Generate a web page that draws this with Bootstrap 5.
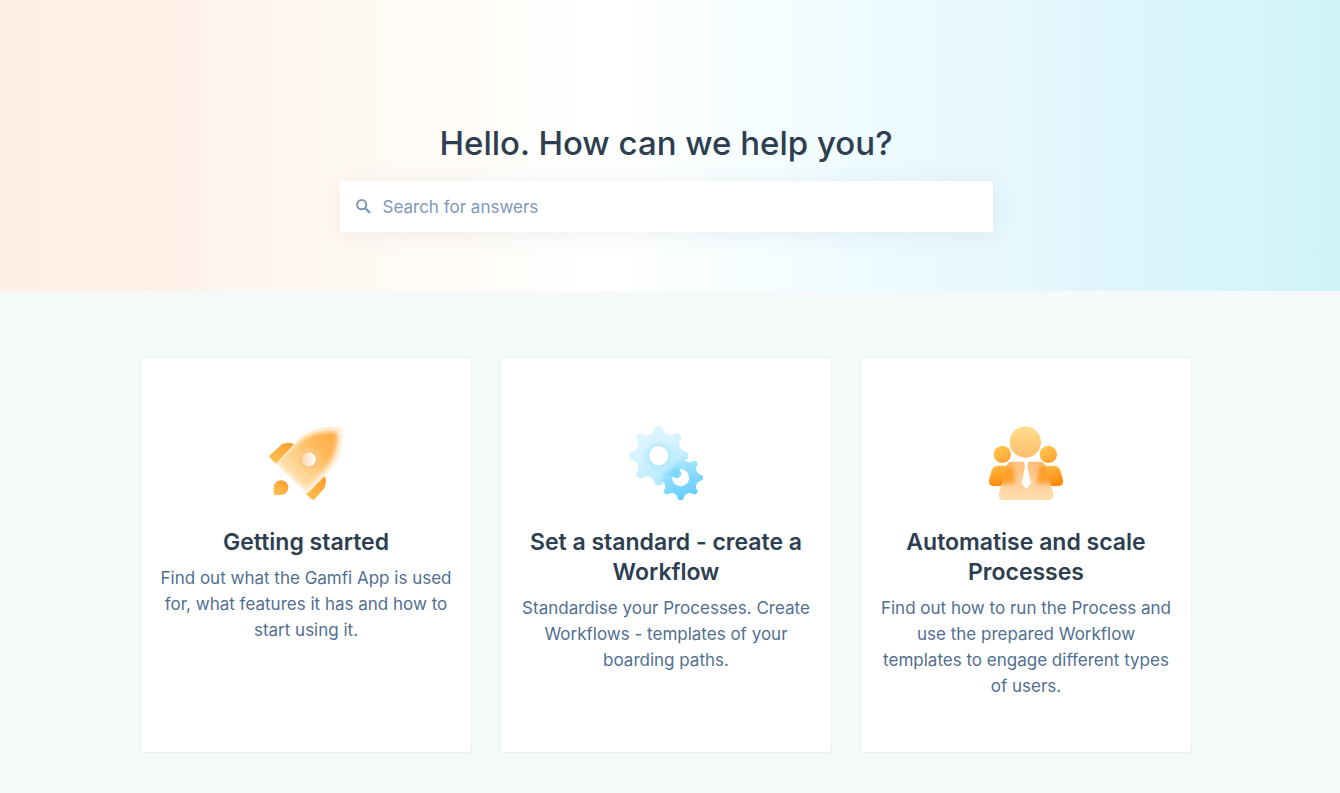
<!DOCTYPE html>
<html lang="en">
<head>
<meta charset="utf-8">
<meta name="viewport" content="width=device-width, initial-scale=1">
<title>Help center</title>
<link rel="stylesheet" href="https://cdn.jsdelivr.net/npm/bootstrap@5.3.0/dist/css/bootstrap.min.css">
<style>
  body { font-family: Inter, "Open Sans", sans-serif; font-size: 17px; line-height: 26px; color: #516f90; background: #f5f9fa; }
  .hero { padding: 120px 8px 59px 0; background: linear-gradient(90deg, #ffeee2 0%, #fff0e6 10%, #fff5f0 19%, #fffaf5 30%, #fffdfa 38%, #fff 45%, #fafeff 52%, #f0fcff 62%, #e8f9fe 72%, #dff5fc 83%, #d5f5fa 92%, #cff3f9 100%); }
  .hero-title { font-size: 33px; line-height: 46px; font-weight: 500; color: #2d3e50; margin-bottom: 15px; }
  .search-box { max-width: 653px; height: 51px; background: #fff; border-radius: 3px; box-shadow: 0 2px 24px rgba(45, 62, 80, .08); padding: 0 16px; gap: 12px; }
  .search-box input { color: #33475b; font-size: 17px; line-height: 26px; }
  .search-box input::placeholder { color: #7c98b6; opacity: 1; }
  .topics { max-width: 1080px; padding: 66px 14px 40px; }
  .topics .row { --bs-gutter-x: 28px; --bs-gutter-y: 28px; }
  .topic { color: #516f90; border: 1px solid #eaf0f3; border-radius: 3px; padding: 65px 19px 53px; }
  .topic svg { margin-bottom: 24px; }
  .topic-title { font-size: 23px; line-height: 30px; font-weight: 600; color: #2d3e50; margin-bottom: 8px; }
</style>
</head>
<body>
<header class="hero">
  <div class="container-fluid d-flex flex-column align-items-center">
    <h1 class="hero-title text-center">Hello. How can we help you?</h1>
    <form class="search-box d-flex align-items-center w-100" role="search">
      <label for="search" class="d-flex flex-shrink-0" aria-label="Search">
        <svg width="15" height="15" viewBox="0 0 15 15" fill="none" stroke="#7c98b6" stroke-width="2"><circle cx="5.7" cy="5.7" r="4.6"/><path d="M9 9l5 5" stroke-width="2.4"/></svg>
      </label>
      <input id="search" type="text" class="form-control border-0 shadow-none p-0" placeholder="Search for answers">
    </form>
  </div>
</header>

<main class="pe-2">
  <div class="topics container-fluid">
    <div class="row row-cols-1 row-cols-md-3">
      <div class="col">
        <a href="#" class="topic card h-100 text-center text-decoration-none align-items-center">
          <svg width="80" height="80" viewBox="33 24 240 240" aria-hidden="true">
            <defs>
              <linearGradient id="fin" x1="0" y1="1" x2="1" y2="0"><stop stop-color="#ffc553"/><stop offset="1" stop-color="#ff9a2b"/></linearGradient>
              <linearGradient id="hull" gradientUnits="userSpaceOnUse" x1="100" y1="200" x2="245" y2="60"><stop stop-color="#ffe3b8"/><stop offset=".3" stop-color="#ffd48f"/><stop offset=".65" stop-color="#ffba5c"/><stop offset="1" stop-color="#ffac45"/></linearGradient>
              <linearGradient id="port"><stop stop-color="#ffd3a5"/><stop offset="1" stop-color="#fff"/></linearGradient>
              <filter id="soft6" x="-20%" y="-20%" width="140%" height="140%"><feGaussianBlur stdDeviation="7"/></filter>
              <clipPath id="hullClip"><path d="M62 146L139 64Q181 30 257 35Q265 35 265 43Q269 124 224 168L157 236Z"/></clipPath>
            </defs>
            <path fill="url(#fin)" d="M46 119L76 92Q88 81 110 84L119 91L63 147L43 127Q40 123 46 119Z"/>
            <path fill="url(#fin)" d="M152 235L206 181L212 190Q215 209 205 223L180 251Q174 257 167 251Z"/>
            <path fill="url(#fin)" d="M56 219A22 22 0 1 1 78 240H60Q56 240 56 236Z"/>
            <path fill="#fff3e2" d="M62 146L139 64Q181 30 257 35Q265 35 265 43Q269 124 224 168L157 236Z"/>
            <g clip-path="url(#hullClip)"><path filter="url(#soft6)" fill="url(#hull)" d="M65 139L142 74Q180 48 238 50Q249 51 248 62Q247 119 216 156L154 222Z"/></g>
            <circle cx="163" cy="133" r="34" fill="#ffc783" opacity=".65"/>
            <circle cx="163" cy="133" r="25" fill="#ffb061" opacity=".7"/>
            <circle cx="161" cy="133" r="22" fill="url(#port)"/>
          </svg>
          <h2 class="topic-title">Getting started</h2>
          <p class="mb-0">Find out what the Gamfi App is used for, what features it has and how to start using it.</p>
        </a>
      </div>
      <div class="col">
        <a href="#" class="topic card h-100 text-center text-decoration-none align-items-center">
          <svg width="80" height="80" viewBox="30 24 240 240" aria-hidden="true">
            <defs>
              <path id="tooth" d="M0 0L63 -27C67 -19 71 -15 77 -13C85 -13 90 -7 90 0C90 7 85 13 77 13C71 15 67 19 63 27Z"/>
              <clipPath id="gear">
                <circle r="68"/>
                <use href="#tooth"/><use href="#tooth" transform="rotate(45)"/><use href="#tooth" transform="rotate(90)"/><use href="#tooth" transform="rotate(135)"/>
                <use href="#tooth" transform="rotate(180)"/><use href="#tooth" transform="rotate(225)"/><use href="#tooth" transform="rotate(270)"/><use href="#tooth" transform="rotate(315)"/>
              </clipPath>
              <linearGradient id="gearSmall" x1="0" y1="0" x2=".4" y2="1"><stop stop-color="#c4f0ff"/><stop offset="1" stop-color="#65ceff"/></linearGradient>
              <linearGradient id="gearBig" x1="0" y1="0" x2=".6" y2="1"><stop stop-color="#e3f7ff"/><stop offset=".5" stop-color="#d6f3ff"/><stop offset="1" stop-color="#b2e8ff"/></linearGradient>
              <filter id="soft12" x="-50%" y="-50%" width="200%" height="200%"><feGaussianBlur stdDeviation="11"/></filter>
            </defs>
            <g transform="translate(194 188) scale(.75)">
              <rect x="-92" y="-92" width="184" height="184" fill="url(#gearSmall)" clip-path="url(#gear)"/>
              <circle r="34" fill="#fff"/>
            </g>
            <g transform="translate(128 122)">
              <g clip-path="url(#gear)">
                <rect x="-92" y="-92" width="184" height="184" fill="url(#gearBig)"/>
                <circle r="33" fill="#9be0ff" filter="url(#soft12)"/>
                <path d="M85 10L60 30L15 60L20 85L60 70L85 40Z" fill="#6fd3ff" filter="url(#soft12)"/>
              </g>
              <circle r="29" fill="#fff"/>
            </g>
          </svg>
          <h2 class="topic-title">Set a standard - create a Workflow</h2>
          <p class="mb-0">Standardise your Processes. Create Workflows - templates of your boarding paths.</p>
        </a>
      </div>
      <div class="col">
        <a href="#" class="topic card h-100 text-center text-decoration-none align-items-center">
          <svg width="80" height="80" viewBox="30 24 240 240" aria-hidden="true">
            <defs>
              <linearGradient id="head" x1="0" y1="0" x2="0" y2="1"><stop stop-color="#ffdf8e"/><stop offset="1" stop-color="#ffbd6b"/></linearGradient>
              <linearGradient id="side" x1="0" y1="0" x2=".5" y2="1"><stop stop-color="#ffcb50"/><stop offset="1" stop-color="#ffa637"/></linearGradient>
              <linearGradient id="arm" x1="0" y1="0" x2=".3" y2="1"><stop stop-color="#ffbd48"/><stop offset="1" stop-color="#ff8a0c"/></linearGradient>
              <linearGradient id="torso" x1="0" y1="0" x2="0" y2="1"><stop stop-color="#ffc07b"/><stop offset=".55" stop-color="#ffd09b"/><stop offset="1" stop-color="#ffdfae"/></linearGradient>
              <clipPath id="torsoClip"><path id="torsoShape" d="M103 140H197Q204 141 208 152L232 235Q234 252 222 255H80Q66 252 69 235L92 152Q96 141 103 140Z"/></clipPath>
            </defs>
            <circle cx="79" cy="118" r="26" fill="url(#side)"/>
            <circle cx="217" cy="118" r="26" fill="url(#side)"/>
            <path fill="url(#arm)" d="M66 152H110V213H50Q36 211 39 195L47 166Q52 153 66 152Z"/>
            <path fill="url(#arm)" d="M234 152H190V213H250Q264 211 261 195L253 166Q248 153 234 152Z"/>
            <use href="#torsoShape" fill="url(#torso)"/>
            <g clip-path="url(#torsoClip)">
              <path filter="url(#soft6)" fill="#ff981f" opacity=".85" d="M62 152H108Q117 160 116 206H50ZM238 152H192Q183 160 184 206H250Z"/>
            </g>
            <circle cx="148" cy="81" r="48" fill="#fff"/>
            <circle cx="148" cy="81" r="47" fill="url(#head)"/>
            <path fill="#fff" d="M143 138H158L154 155L165 205L151 223L137 205L147 155Z"/>
          </svg>
          <h2 class="topic-title">Automatise and scale Processes</h2>
          <p class="mb-0">Find out how to run the Process and use the prepared Workflow templates to engage different types of users.</p>
        </a>
      </div>
    </div>
  </div>
</main>
<script src="https://cdn.jsdelivr.net/npm/bootstrap@5.3.0/dist/js/bootstrap.bundle.min.js"></script>
</body>
</html>
